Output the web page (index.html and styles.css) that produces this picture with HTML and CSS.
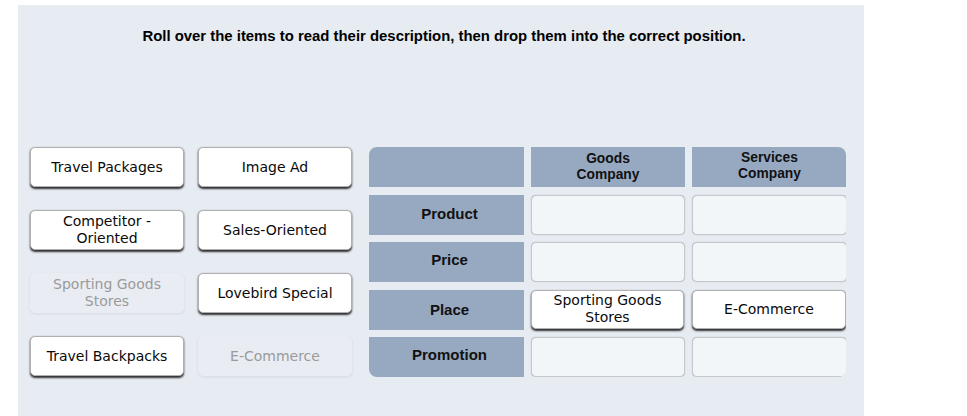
FILE: index.html
```html
<!DOCTYPE html>
<html lang="en">
<head>
  <meta charset="UTF-8">
  <title>Drag and drop - Marketing mix</title>
  <link rel="stylesheet" href="styles.css">
</head>
<body>

  <div class="panel">
    <p class="prompt">Roll over the items to read their description, then drop them into the correct position.</p>

    <div class="game">
      <div class="bank">
        <div class="tile">Travel Packages</div>
        <div class="tile">Image Ad</div>
        <div class="tile">Competitor -<br>Oriented</div>
        <div class="tile">Sales-Oriented</div>
        <div class="tile used">Sporting Goods<br>Stores</div>
        <div class="tile">Lovebird Special</div>
        <div class="tile">Travel Backpacks</div>
        <div class="tile used">E-Commerce</div>
      </div>

      <div class="board">
        <div class="head"></div>
        <div class="head">Goods<br>Company</div>
        <div class="head up">Services<br>Company</div>

        <div class="label up">Product</div>
        <div class="drop"></div>
        <div class="drop"></div>

        <div class="label upper">Price</div>
        <div class="drop"></div>
        <div class="drop"></div>

        <div class="label">Place</div>
        <div class="drop filled"><div class="tile">Sporting Goods<br>Stores</div></div>
        <div class="drop filled"><div class="tile">E-Commerce</div></div>

        <div class="label upper">Promotion</div>
        <div class="drop"></div>
        <div class="drop"></div>
      </div>
    </div>
  </div>

</body>
</html>
```

FILE: styles.css
```css
body {
  margin: 0;
  padding: 5px 0 0 18px;
  background: #fff;
  overflow: hidden;
}
.panel {
  width: 846px;
  height: 430px;
  background: #e7ebf2;
  box-sizing: border-box;
  padding: 22px 18px 0 12px;
}
.prompt {
  margin: 0;
  font-family: 'Liberation Sans', Arial, sans-serif;
  font-weight: bold;
  font-size: 14.9px;
  line-height: 18px;
  color: #000;
  text-align: center;
  padding-left: 12px;
}
.game {
  display: flex;
  gap: 17px;
  margin-top: 102px;
}
.bank {
  display: grid;
  grid-template-columns: 154px 154px;
  grid-auto-rows: 40px;
  column-gap: 14px;
  row-gap: 23px;
}
.tile {
  display: flex;
  align-items: center;
  justify-content: center;
  text-align: center;
  background: #fff;
  border: 1px solid #b0b0b0;
  border-radius: 5px;
  box-shadow: 0 1.5px 2px rgba(0, 0, 0, 0.8);
  font-family: 'DejaVu Sans', Verdana, sans-serif;
  font-size: 14px;
  line-height: 17px;
  color: #0a0a0a;
  box-sizing: border-box;
}
.tile.used {
  background: #e9edf3;
  border-color: #e9edf3;
  box-shadow: 0 1px 3px rgba(0, 0, 0, 0.08);
  color: #9a9a9a;
}
.board {
  display: grid;
  grid-template-columns: 155px 154px 155px;
  grid-auto-rows: 40px;
  column-gap: 7px;
  row-gap: 7.5px;
  border-radius: 8px;
  overflow: hidden;
}
.head, .label {
  background: #97a9c1;
  display: flex;
  align-items: center;
  justify-content: center;
  text-align: center;
  font-family: 'Liberation Sans', Arial, sans-serif;
  font-weight: bold;
  color: #111;
}
.head {
  font-size: 13.8px;
  line-height: 16px;
}
.label {
  font-size: 15px;
  padding-left: 6px;
}
.up {
  padding-bottom: 3px;
}
.upper {
  padding-bottom: 6px;
}
.head.up {
  padding-bottom: 2px;
}
.drop {
  background: #f3f6f9;
  border: 1px solid #c6c8cb;
  border-radius: 5px;
  box-shadow: 0 0 1px rgba(0, 0, 0, 0.3);
  box-sizing: border-box;
}
.drop.filled {
  background: none;
  border: none;
  box-shadow: none;
  display: flex;
  padding: 0 1px 1px 0;
}
.drop.filled .tile {
  flex: 1;
}
```
